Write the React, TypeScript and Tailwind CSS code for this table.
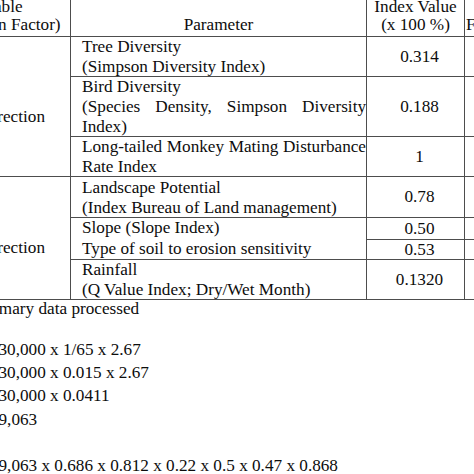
import React from "react";

const cell = "bg-white";
const paramCell = "bg-white pl-[11px] pr-0 text-justify leading-[20px]";
const valueCell = "bg-white flex items-center justify-center pl-[8px] leading-[20px]";

export default function App() {
  return (
    <div className="w-[474px] h-[474px] overflow-hidden bg-white text-[#0d0d0d] font-['Liberation_Serif','Times_New_Roman',serif] text-[17.2px]">
      <div className="ml-[-82px] mt-[-2px] w-max">
        <div className="grid grid-cols-[152px_295px_97px_120px] grid-rows-[38px_39px_59px_39px_40px_21px_19px_39px] gap-px bg-[#4d4d4d] pb-px">
          {/* Header */}
          <div className={`${cell} flex flex-col justify-end pb-[2px] text-center leading-[18px]`}>
            <div>Variable</div>
            <div>(Correction Factor)</div>
          </div>
          <div className={`${cell} flex flex-col justify-end pb-[2px] text-center leading-[18px]`}>
            <div>Parameter</div>
          </div>
          <div className={`${cell} flex flex-col justify-end pb-[2px] text-center leading-[18px]`}>
            <div>Index Value</div>
            <div>(x 100 %)</div>
          </div>
          <div className={`${cell} flex flex-col justify-end pb-[2px] pl-[1px] leading-[18px] tracking-[3px]`}>
            <div>Factor</div>
          </div>

          {/* Group 1 */}
          <div className={`${cell} row-span-3 text-right pr-[25px] pt-[70px] leading-[20px]`}>
            Correction
          </div>
          <div className={paramCell}>
            Tree Diversity
            <br />
            (Simpson Diversity Index)
          </div>
          <div className={valueCell}>0.314</div>
          <div className={cell}></div>

          <div className={paramCell}>
            Bird Diversity
            <br />
            (Species Density, Simpson Diversity Index)
          </div>
          <div className={valueCell}>0.188</div>
          <div className={cell}></div>

          <div className={paramCell}>
            Long-tailed Monkey Mating Disturbance Rate Index
          </div>
          <div className={valueCell}>1</div>
          <div className={cell}></div>

          {/* Group 2 */}
          <div className={`${cell} row-span-4 text-right pr-[25px] pt-[61px] leading-[20px]`}>
            Correction
          </div>
          <div className={`${paramCell} pt-[1px]`}>
            Landscape Potential
            <br />
            (Index Bureau of Land management)
          </div>
          <div className={valueCell}>0.78</div>
          <div className={cell}></div>

          <div className={paramCell}>Slope (Slope Index)</div>
          <div className={valueCell}>0.50</div>
          <div className={cell}></div>

          <div className={`${paramCell} mt-[-1px]`}>Type of soil to erosion sensitivity</div>
          <div className={valueCell}>0.53</div>
          <div className={cell}></div>

          <div className={paramCell}>
            Rainfall
            <br />
            (Q Value Index; Dry/Wet Month)
          </div>
          <div className={valueCell}>0.1320</div>
          <div className={cell}></div>
        </div>
      </div>

      <div className="whitespace-nowrap">
        <div className="ml-[-78px] leading-[16px] mt-[1px]">Source: Primary data processed</div>
        <div className="mt-[21px] ml-[-1.5px] leading-[23.2px]">
          <div>30,000 x 1/65 x 2.67</div>
          <div>30,000 x 0.015 x 2.67</div>
          <div>30,000 x 0.0411</div>
          <div>9,063</div>
          <div className="h-[23.2px]"></div>
          <div>9,063 x 0.686 x 0.812 x 0.22 x 0.5 x 0.47 x 0.868</div>
        </div>
      </div>
    </div>
  );
}
